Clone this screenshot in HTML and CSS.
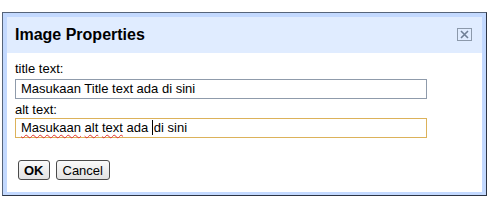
FILE: index.html
```html
<!DOCTYPE html>
<html lang="en">
<head>
  <meta charset="UTF-8">
  <title>Image Properties</title>
  <link rel="stylesheet" href="styles.css">
</head>
<body>
  <div class="dialog">
    <div class="dialog-title">
      <span>Image Properties</span>
      <span class="close" title="Close">
        <svg width="11" height="9" viewBox="0 0 11 9">
          <path d="M2 1 L9 8 M9 1 L2 8" stroke="#6f7f96" stroke-width="1.6" fill="none"/>
        </svg>
      </span>
    </div>
    <div class="dialog-content">
      <div class="label">title text:</div>
      <div class="field">Masukaan Title text ada di sini</div>
      <div class="label">alt text:</div>
      <div class="field focused"><span class="typo">Masukaan</span> <span class="typo">alt</span> <span class="typo">text</span> ada <span class="caret"></span>di sini</div>
      <div class="buttons">
        <button class="button ok">OK</button>
        <button class="button">Cancel</button>
      </div>
    </div>
  </div>
</body>
</html>
```

FILE: styles.css
```css
body {
  margin: 0;
  padding: 12px 0 0 2px;
  background: #fff;
  font-family: "Liberation Sans", Arial, sans-serif;
  font-size: 13px;
  color: #000;
}
.dialog {
  width: 485px;
  box-sizing: border-box;
  background: #c3d9ff;
  border: 1px solid #56647a;
  border-right-color: #2c3444;
  border-bottom-color: #2c3444;
  padding: 4px 4px 3px 4px;
}
.dialog-title {
  display: flex;
  justify-content: space-between;
  align-items: center;
  height: 36px;
  padding: 0 10px 0 8px;
  background: #e0ecff;
  font-size: 16px;
  font-weight: bold;
}
.close {
  display: flex;
  align-items: center;
  justify-content: center;
  width: 13px;
  height: 11px;
  border: 1px solid #8c99ab;
  margin-top: -1px;
}
.dialog-content {
  background: #fff;
  padding: 8px 8px 12px 8px;
}
.label {
  line-height: 15px;
}
.field {
  width: 412px;
  height: 20px;
  box-sizing: border-box;
  border: 1px solid #8f9bab;
  padding: 0 5px;
  line-height: 18px;
  margin: 3px 0 3px;
  white-space: nowrap;
}
.field.focused {
  border-color: #dcb25a;
  margin-top: 1px;
}
.typo {
  text-decoration: underline wavy #e03030;
  text-decoration-thickness: 1px;
  text-underline-offset: 2px;
}
.caret {
  display: inline-block;
  width: 1px;
  height: 15px;
  background: #000;
  vertical-align: -3px;
  margin-right: 1px;
}
.buttons {
  display: flex;
  gap: 6px;
  margin: 22px 0 0 3px;
}
.button {
  height: 20px;
  padding: 0 6px;
  font-family: "Liberation Sans", Arial, sans-serif;
  font-size: 13px;
  color: #000;
  background: linear-gradient(#fafafa, #e2e2e2);
  border: 1px solid #4a4a4a;
  border-radius: 3px;
  cursor: pointer;
}
.button.ok {
  font-weight: bold;
  padding: 0 5px;
}
```
